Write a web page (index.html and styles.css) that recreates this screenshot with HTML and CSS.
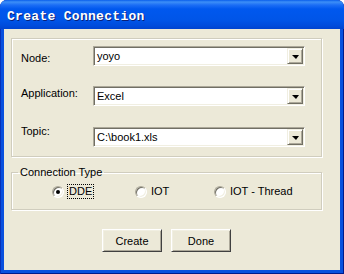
FILE: index.html
```html
<!DOCTYPE html>
<html>
<head>
<meta charset="utf-8">
<title>Create Connection</title>
<link rel="stylesheet" href="styles.css">
</head>
<body>
<div class="window">
  <div class="titlebar"><span class="title">Create Connection</span></div>
  <div class="client">
    <div class="group">
      <div class="row">
        <span class="label label-node">Node:</span>
        <div class="combo"><span class="combo-text">yoyo</span><span class="drop"><span class="tri"></span></span></div>
      </div>
      <div class="row row-app">
        <span class="label label-app">Application:</span>
        <div class="combo"><span class="combo-text">Excel</span><span class="drop"><span class="tri"></span></span></div>
      </div>
      <div class="row row-topic">
        <span class="label label-topic">Topic:</span>
        <div class="combo"><span class="combo-text">C:\book1.xls</span><span class="drop"><span class="tri"></span></span></div>
      </div>
    </div>
    <fieldset class="ctype">
      <legend>Connection Type</legend>
      <div class="radios">
        <div class="opt opt-dde"><span class="radio checked"><span class="dot"></span></span><span class="opt-text focus">DDE</span></div>
        <div class="opt opt-iot"><span class="radio"></span><span class="opt-text">IOT</span></div>
        <div class="opt"><span class="radio"></span><span class="opt-text">IOT - Thread</span></div>
      </div>
    </fieldset>
    <div class="buttons">
      <button class="btn">Create</button>
      <button class="btn">Done</button>
    </div>
  </div>
</div>
</body>
</html>
```
FILE: styles.css
```css
html, body {
  margin: 0;
  padding: 0;
  background: #ffffff;
}
.window {
  width: 344px;
  height: 274px;
  display: flex;
  flex-direction: column;
  background: #0A50DE;
  border-radius: 7px 7px 0 0;
  overflow: hidden;
  box-shadow: inset 1px 0 0 #0831B8, inset -1px 0 0 #001A8C, inset 0 -1px 0 #001A8C;
  font-family: "Liberation Sans", Arial, sans-serif;
  font-size: 11px;
  color: #000;
}
.titlebar {
  height: 29px;
  flex: none;
  box-sizing: border-box;
  padding: 9px 0 0 7px;
  background: linear-gradient(to bottom, #0A5EEB 0px, #3D8FF7 2px, #1C6EF5 5px, #0058EE 9px, #0055E8 20px, #004BDB 26px, #0043CF 29px);
}
.title {
  font-family: "Liberation Mono", "Courier New", monospace;
  font-weight: bold;
  font-size: 13px;
  line-height: 15px;
  letter-spacing: 0.3px;
  color: #ffffff;
  text-shadow: 1px 1px 0 #0A1F78;
  display: block;
}
.client {
  flex: 1;
  margin: 0 4px 4px 4px;
  background: #ECE9D8;
  padding: 9px 0 0 7px;
  display: flex;
  flex-direction: column;
  align-items: flex-start;
}
.group {
  width: 311px;
  height: 119px;
  box-sizing: border-box;
  border: 1px solid #D0CDBE;
  box-shadow: inset 1px 1px 0 #ffffff, 1px 1px 0 #ffffff;
  padding: 7px 0 0 9px;
  display: flex;
  flex-direction: column;
  gap: 20px;
}
.row {
  display: flex;
  align-items: flex-start;
  height: 20px;
}
.row-topic {
  margin-top: 1px;
}
.label {
  width: 72px;
  flex: none;
  line-height: 13px;
}
.label-node { margin-top: 6px; }
.label-app { margin-top: 1px; }
.label-topic { margin-top: -2px; }
.combo {
  width: 212px;
  height: 20px;
  box-sizing: border-box;
  border: 1px solid;
  border-color: #ACA899 #FFFFFF #FFFFFF #ACA899;
  box-shadow: inset 1px 1px 0 #716F64, inset -1px -1px 0 #F1EFE2;
  background: #ffffff;
  padding: 1px;
  display: flex;
  align-items: stretch;
}
.combo-text {
  flex: 1;
  padding-left: 2px;
  line-height: 16px;
}
.drop {
  width: 16px;
  flex: none;
  box-sizing: border-box;
  background: #ECE9D8;
  border: 1px solid;
  border-color: #F1EFE2 #716F64 #716F64 #F1EFE2;
  box-shadow: inset 1px 1px 0 #ffffff, inset -1px -1px 0 #ACA899;
  display: flex;
  align-items: center;
  justify-content: center;
}
.tri {
  width: 0;
  height: 0;
  border-left: 4px solid transparent;
  border-right: 3px solid transparent;
  border-top: 4px solid #000;
  margin-top: 1px;
}
.ctype {
  width: 311px;
  height: 44px;
  box-sizing: border-box;
  margin: 9px 0 0 0;
  padding: 0 0 0 6px;
  border: 1px solid #D0CDBE;
  box-shadow: inset 1px 1px 0 #ffffff, 1px 1px 0 #ffffff;
  min-width: 0;
}
.ctype legend {
  padding: 0 2px;
  line-height: 13px;
}
.radios {
  display: grid;
  grid-template-columns: 83px 79px auto;
  padding: 5px 0 0 34px;
  align-items: center;
}
.opt {
  display: flex;
  align-items: center;
  gap: 4px;
}
.opt-dde { gap: 3px; }
.radio {
  width: 12px;
  height: 12px;
  box-sizing: border-box;
  border-radius: 50%;
  border: 1px solid;
  border-color: #ACA899 #FFFFFF #FFFFFF #ACA899;
  box-shadow: inset 1px 1px 0 #716F64, inset -1px -1px 0 #F1EFE2;
  background: #ffffff;
  display: flex;
  align-items: center;
  justify-content: center;
  flex: none;
}
.dot {
  width: 4px;
  height: 4px;
  border-radius: 50%;
  background: #000;
}
.opt-text {
  line-height: 13px;
}
.focus {
  border: 1px dotted #000;
  padding: 0 1px;
}
.buttons {
  width: 311px;
  display: flex;
  justify-content: center;
  gap: 9px;
  margin-top: 19px;
}
.btn {
  width: 60px;
  height: 23px;
  box-sizing: border-box;
  margin: 0;
  padding: 0;
  font-family: "Liberation Sans", Arial, sans-serif;
  font-size: 11px;
  color: #000;
  background: #ECE9D8;
  border: 1px solid;
  border-color: #FFFFFF #404040 #404040 #FFFFFF;
  box-shadow: inset 1px 1px 0 #F1EFE2, inset -1px -1px 0 #ACA899;
  border-radius: 0;
}
```
